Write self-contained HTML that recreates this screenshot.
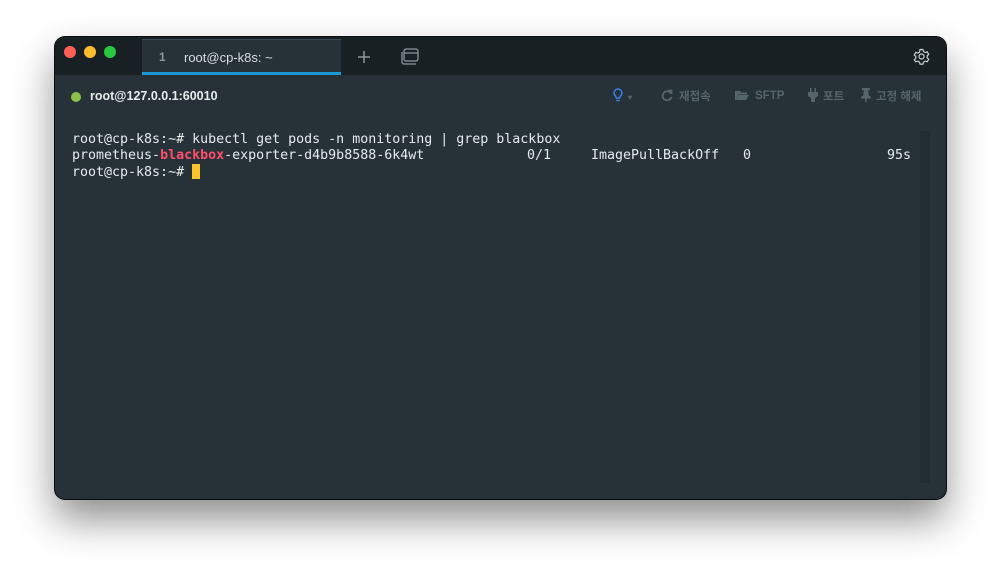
<!DOCTYPE html>
<html><head><meta charset="utf-8"><style>
*{margin:0;padding:0;box-sizing:border-box}
body{width:1001px;height:573px;background:#fff;position:relative;overflow:hidden;font-family:"Liberation Sans","Noto Sans CJK KR",sans-serif}
.win{position:absolute;left:55px;top:37px;width:891px;height:462px;border-radius:10px;background:#263238;overflow:hidden;box-shadow:0 20px 40px rgba(0,0,0,.45),0 0 0 1px #0c1012}
.tb{position:absolute;left:0;top:0;width:100%;height:38px;background:#192023}
.dot{position:absolute;top:9px;width:12px;height:12px;border-radius:50%}
.tab{position:absolute;left:87px;top:2px;width:199px;height:36px;background:#263238;border-top:1px solid #3a4a52}
.tab .u{position:absolute;left:0;bottom:0;width:100%;height:3px;background:#1b9ad6}
.tab .n{position:absolute;left:17px;top:10px;font-size:12px;color:#8a979d;font-weight:bold}
.tab .t{position:absolute;left:42px;top:10px;font-size:13px;color:#d7dde0}
.bar{position:absolute;top:51px;font-size:11.5px;color:#56646b;font-weight:bold}
.m{position:absolute;font-family:"DejaVu Sans Mono","Liberation Mono",monospace;font-size:13.3px;line-height:16px;color:#e6ebed;white-space:pre}
.r{color:#ff4f6d;font-weight:bold}
.cur{display:inline-block;width:8px;height:15px;background:#fcc42d;vertical-align:-3px}
.sb{position:absolute;left:865px;top:94px;width:10px;height:352px;background:#222d32}
</style></head><body>
<div class="win">
 <div class="tb">
  <div class="dot" style="left:9px;background:#fe5f57"></div>
  <div class="dot" style="left:29px;background:#febc2e"></div>
  <div class="dot" style="left:49px;background:#28c840"></div>
  <div class="tab"><span class="n">1</span><span class="t">root@cp-k8s: ~</span><div class="u"></div></div>
  <svg style="position:absolute;left:301px;top:12px" width="16" height="16"><path d="M8 2v12M2 8h12" stroke="#8a979d" stroke-width="1.5"/></svg>
  <svg style="position:absolute;left:345px;top:10px" width="20" height="18" fill="none" stroke="#8a979d" stroke-width="1.3"><rect x="4" y="2" width="14" height="12" rx="2"/><path d="M4 6h14M2 5v10a2 2 0 0 0 2 2h12"/></svg>
  <svg style="position:absolute;left:858px;top:11px" width="17" height="17" fill="none" stroke="#c8d0d4" stroke-width="1.2"><circle cx="8.5" cy="8.5" r="2.5"/><path d="M7 1.5h3l.5 2 1.7 1 2-.7 1.5 2.6-1.5 1.4v2l1.5 1.4-1.5 2.6-2-.7-1.7 1-.5 2H7l-.5-2-1.7-1-2 .7L1.3 11.8l1.5-1.4v-2L1.3 7l1.5-2.6 2 .7 1.7-1z"/></svg>
 </div>
 <div style="position:absolute;left:16px;top:55px;width:10px;height:10px;border-radius:50%;background:#8bc34a"></div>
 <div class="bar" style="left:35px;top:52px;color:#e8ecee;font-size:12.5px">root@127.0.0.1:60010</div>
 <svg style="position:absolute;left:558px;top:51px" width="10" height="15" fill="none" stroke="#3b7de0" stroke-width="1.5"><path d="M5 1a4 4 0 0 0-2.5 7c.5.6.7 1.2.7 2h3.6c0-.8.2-1.4.7-2A4 4 0 0 0 5 1zM3.2 12.5h3.6"/></svg>
 <div class="bar" style="left:573px;font-size:8px;top:56px">▾</div>
 <svg style="position:absolute;left:606px;top:52px" width="12" height="12" fill="none" stroke="#56646b" stroke-width="1.8"><path d="M10 4.5A4.5 4.5 0 1 0 10.5 8"/><path d="M7 1.5h3.5V5" /></svg>
 <div class="bar" style="left:624px">재접속</div>
 <svg style="position:absolute;left:680px;top:53px" width="14" height="11"><path d="M0 1h5l1 1.5h6v2H3L0 10z M3 5h11l-3 5H0z" fill="#56646b"/></svg>
 <div class="bar" style="left:700px;top:53px">SFTP</div>
 <svg style="position:absolute;left:753px;top:51px" width="10" height="14"><path d="M2 0h1.5v4h3V0H8v4h2v4l-3 2v4H3v-4L0 8V4h2z" fill="#56646b"/></svg>
 <div class="bar" style="left:768px">포트</div>
 <svg style="position:absolute;left:806px;top:51px" width="10" height="14"><path d="M1 0h8v2H7.5v5L10 9v1.5H5.8V14h-1.6v-3.5H0V9l2.5-2V2H1z" fill="#56646b"/></svg>
 <div class="bar" style="left:821px">고정 해제</div>
 <div class="m" style="left:17px;top:95px">root@cp-k8s:~# kubectl get pods -n monitoring | grep blackbox</div>
 <div class="m" style="left:17px;top:111px">prometheus-<span class="r">blackbox</span>-exporter-d4b9b8588-6k4wt</div>
 <div class="m" style="left:472px;top:111px">0/1</div>
 <div class="m" style="left:536px;top:111px">ImagePullBackOff</div>
 <div class="m" style="left:688px;top:111px">0</div>
 <div class="m" style="left:832px;top:111px">95s</div>
 <div class="m" style="left:17px;top:127px">root@cp-k8s:~# <span class="cur"></span></div>
 <div class="sb"></div>
</div>
</body></html>
